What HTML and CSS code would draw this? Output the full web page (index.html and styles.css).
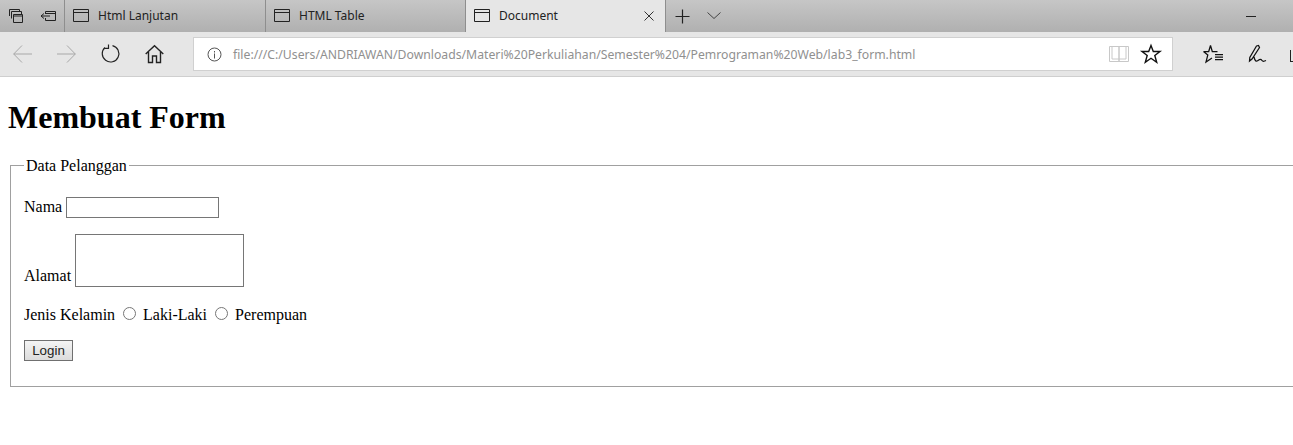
FILE: index.html
```html
<!DOCTYPE html>
<html lang="id">
<head>
<meta charset="utf-8">
<title>Document</title>
<link rel="stylesheet" href="styles.css">
</head>
<body>
<header class="browser">
  <div class="tabbar">
    <div class="tab-tools">
      <svg class="ic16" viewBox="0 0 16 16"><path d="M1.500 8V1.500H11.500V3.500M3.500 10.500V3.500H13.500V6.500M5.500 6.500H14.500V14.500H5.500ZM5.500 8H14.500"/></svg>
      <svg class="ic16" viewBox="0 0 16 16"><path d="M5.500 6V3.500H15.500V12.500H5.500V10M5.500 5.500H15.500M1 8H10M4 5.500L1 8L4 10.500"/></svg>
    </div>
    <div class="tab first">
      <svg class="ic16" viewBox="0 0 16 16"><path d="M.5 1.500H15.500V13.500H.5ZM.5 4.500H15.500"/></svg>
      <span class="tab-title">Html Lanjutan</span>
    </div>
    <div class="tab">
      <svg class="ic16" viewBox="0 0 16 16"><path d="M.5 1.500H15.500V13.500H.5ZM.5 4.500H15.500"/></svg>
      <span class="tab-title">HTML Table</span>
    </div>
    <div class="tab active">
      <svg class="ic16" viewBox="0 0 16 16"><path d="M.5 1.500H15.500V13.500H.5ZM.5 4.500H15.500"/></svg>
      <span class="tab-title">Document</span>
      <svg class="close" viewBox="0 0 10 10"><path d="M.5 .5L9.500 9.500M9.500 .5L.5 9.500"/></svg>
    </div>
    <div class="tab-actions">
      <svg class="plus" viewBox="0 0 15 15"><path d="M7.500 .5V14.500M.5 7.500H14.500"/></svg>
      <svg class="chev" viewBox="0 0 14 8"><path d="M.5 .5L7 6.500L13.500 .5"/></svg>
    </div>
    <div class="window-ctl"><span class="minimize"></span></div>
  </div>
  <div class="toolbar">
    <div class="nav">
      <svg class="nav-ic dim" viewBox="0 0 19 18"><path d="M19 9H.7M9 .5L.7 9L9 17.500"/></svg>
      <svg class="nav-ic dim" viewBox="0 0 19 18"><path d="M0 9H18.300M10 .5L18.300 9L10 17.500"/></svg>
      <svg class="nav-ic" viewBox="0 0 19 18"><path d="M11.500 .6A8.300 8.300 0 1 1 4 2.500M7.500 -.5V3.300H3.500"/></svg>
      <svg class="nav-ic bold" viewBox="0 0 19 18"><path d="M.7 9L9.500 .8L18.300 9M3.500 7V17.500H7.500V11H11.500V17.500H15.500V7"/></svg>
    </div>
    <div class="address">
      <svg class="info" viewBox="0 0 15 15"><circle cx="7.500" cy="7.500" r="6.500"/><path d="M7.500 6.500V11.500M7.500 4V5.500"/></svg>
      <span class="url">file:///C:/Users/ANDRIAWAN/Downloads/Materi%20Perkuliahan/Semester%204/Pemrograman%20Web/lab3_form.html</span>
      <svg class="book" viewBox="0 0 20 18"><path d="M.5 1.500H10V16.500H.5ZM10 1.500H19.500V16.500H10ZM3 1.500V14H10M17 1.500V14H10"/></svg>
      <svg class="star" viewBox="0 0 20 20"><path d="M10 1.500L12.300 7.500H19L13.800 11.500L15.700 18.300L10 14.300L4.300 18.300L6.200 11.500L1 7.500H7.700Z"/></svg>
    </div>
    <div class="tools">
      <svg class="tool" viewBox="0 0 20 20"><path d="M7.500 1.500L9.300 7.500H14.500M.5 7.500H5.700L7.500 1.500M.5 7.500L4.800 11L3 18L9 14M12 10.500H20M12 13H20M12 15.500H20"/></svg>
      <svg class="tool pen" viewBox="0 0 19 20"><path d="M9.500 2L11.500 1.500L12.500 3.500L5 15L2.500 17L2.800 13.500ZM7 13C8 17 9 18 11 16.500S14 15 15 16.500S18 17 19 16.500"/></svg>
      <span class="tool-cut"></span>
    </div>
  </div>
</header>
<main class="page">
  <h1 class="title">Membuat Form</h1>
  <form class="form">
    <fieldset class="group">
      <legend>Data Pelanggan</legend>
      <p class="row">Nama <input class="text" type="text"></p>
      <p class="row tall">Alamat <textarea class="area"></textarea></p>
      <p class="row">Jenis Kelamin <input class="radio" type="radio" name="jk"> Laki-Laki <input class="radio" type="radio" name="jk"> Perempuan</p>
      <p class="row"><button class="login" type="button">Login</button></p>
    </fieldset>
  </form>
</main>
</body>
</html>
```

FILE: styles.css
```css
* { box-sizing: border-box; }
html, body { margin: 0; height: 100%; overflow: hidden; background: #fff; }
svg { display: block; fill: none; stroke: #222; stroke-width: 1; flex: none; overflow: visible; }

.browser { font-family: "Noto Sans", sans-serif; }
.tabbar {
  display: flex;
  height: 32px;
  background: linear-gradient(#c6c6c6, #b0b0b0);
  color: #222;
  font-size: 12px;
}
.ic16 { width: 16px; height: 16px; }
.tab-tools {
  display: flex;
  align-items: center;
  gap: 16px;
  width: 65px;
  padding-left: 8px;
  border-right: 1px solid #8e8e8e;
}
.tab {
  display: flex;
  align-items: center;
  width: 200px;
  padding: 0 0 1px 8px;
  border-right: 1px solid #8e8e8e;
}
.tab.first { width: 201px; }
.tab-title { margin-left: 9px; flex: 1; }
.tab.active { background: #e6e6e6; }
.close { width: 10px; height: 10px; margin-right: 11px; stroke: #333; }
.tab-actions {
  display: flex;
  align-items: center;
  gap: 17px;
  padding-left: 9px;
  flex: 1;
}
.plus { width: 15px; height: 15px; stroke-width: 1.2; }
.chev { width: 14px; height: 8px; stroke: #444; }
.window-ctl { display: flex; align-items: center; width: 47px; }
.minimize { width: 10px; height: 1px; background: #222; }

.toolbar {
  display: flex;
  align-items: center;
  height: 45px;
  background: #e6e6e6;
  border-bottom: 1px solid #cfcfcf;
  padding-left: 13px;
}
.nav { display: flex; align-items: center; flex: none; width: 180px; gap: 25px; }
.nav-ic { width: 19px; height: 18px; stroke: #222; stroke-width: 1.2; }
.nav-ic.dim { stroke: #a8a8a8; stroke-width: 1; }
.nav-ic.bold { stroke-width: 1.4; }
.address {
  display: flex;
  flex: none;
  align-items: center;
  width: 980px;
  height: 34px;
  background: #fff;
  border: 1px solid #d0d0d0;
  padding: 0 11px 0 13px;
}
.info { width: 15px; height: 15px; stroke: #555; }
.url { margin-left: 11px; flex: 1; font-size: 12.23px; color: #909090; white-space: nowrap; }
.book { width: 20px; height: 18px; stroke: #c8c8c8; }
.star { width: 20px; height: 20px; margin-left: 12px; stroke-width: 1.4; stroke: #111; }
.tools { display: flex; flex: none; align-items: center; gap: 24px; margin-left: 30px; }
.tool { width: 20px; height: 20px; stroke: #111; stroke-width: 1.25; }
.tool.pen { width: 19px; }
.tool-cut { width: 8px; height: 12px; margin-top: 4px; border-left: 1px solid #222; border-bottom: 1px solid #222; }

.page { padding: 0 8px; font-family: "Liberation Serif", "Times New Roman", serif; font-size: 16px; color: #000; }
.title { font-size: 32px; font-weight: bold; margin: 22px 0 20px; line-height: 37px; }
.form { margin: 0 -60px 0 0; }
.group { margin: 0 2px; padding: 6px 13px 9px; border: 1px solid #a0a0a0; }
.group legend { padding: 1px 2px 0; }
.row { margin: 16px 0; line-height: 18px; }
.row.tall { margin-bottom: 17px; }
.text { width: 153px; height: 21px; border: 1px solid #767676; padding: 1px 2px; vertical-align: baseline; }
.area { width: 169px; height: 53px; border: 1px solid #767676; padding: 2px; vertical-align: -6px; resize: none; }
.radio { width: 13px; height: 13px; margin: 3px 3px 0 4px; accent-color: #777; }
.login {
  width: 49px; height: 21px; padding: 0;
  font-family: "Liberation Sans", Arial, sans-serif; font-size: 13.33px; color: #222;
  background: linear-gradient(#f4f4f4, #dcdcdc);
  border: 1px solid #707070;
}
```
